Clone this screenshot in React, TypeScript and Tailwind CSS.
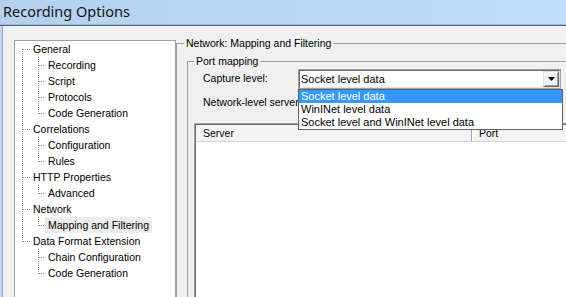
import React from 'react';

type TreeNode = { label: string; children?: string[] };

const tree: TreeNode[] = [
  { label: 'General', children: ['Recording', 'Script', 'Protocols', 'Code Generation'] },
  { label: 'Correlations', children: ['Configuration', 'Rules'] },
  { label: 'HTTP Properties', children: ['Advanced'] },
  { label: 'Network', children: ['Mapping and Filtering'] },
  { label: 'Data Format Extension', children: ['Chain Configuration', 'Code Generation'] },
];

const DOT = '#8c8c8c';

function RootLines({ first, last }: { first: boolean; last: boolean }) {
  return (
    <svg width="15" height="16" className="shrink-0">
      <line x1="7.5" x2="7.5" y1={first ? 8 : 0} y2={last ? 9 : 16} stroke={DOT} strokeDasharray="1 1" />
      <line x1="8" x2="15" y1="8.5" y2="8.5" stroke={DOT} strokeDasharray="1 1" />
    </svg>
  );
}

function ChildLines({ parentLast, last }: { parentLast: boolean; last: boolean }) {
  return (
    <svg width="30" height="16" className="shrink-0">
      {!parentLast && <line x1="7.5" x2="7.5" y1="0" y2="16" stroke={DOT} strokeDasharray="1 1" />}
      <line x1="23.5" x2="23.5" y1="0" y2={last ? 9 : 16} stroke={DOT} strokeDasharray="1 1" />
      <line x1="24" x2="30" y1="8.5" y2="8.5" stroke={DOT} strokeDasharray="1 1" />
    </svg>
  );
}

function TreeRow({ lines, label, selected }: { lines: React.ReactNode; label: string; selected?: boolean }) {
  return (
    <div className="flex h-[16px] items-center">
      {lines}
      <span className={`h-[16px] leading-[16px] px-[3px] whitespace-nowrap ${selected ? 'bg-[#ececec]' : ''}`}>{label}</span>
    </div>
  );
}

function ComboBox() {
  return (
    <div className="relative w-[263px] h-[20px] border border-[#a0a0a0] text-[11px]">
      <div className="flex h-full items-center bg-white border-l border-t border-l-[#696969] border-t-[#696969] border-r border-b border-r-[#e3e3e3] border-b-[#e3e3e3]">
        <span className="flex-1 pl-[1px] leading-[13px]">Socket level data</span>
        <div className="w-[16px] h-full flex items-center justify-center bg-[#f0f0f0] border border-t-[#e3e3e3] border-l-[#e3e3e3] border-r-[#696969] border-b-[#696969] shadow-[inset_1px_1px_0_#fff,inset_-1px_-1px_0_#a0a0a0]">
          <svg width="7" height="4" viewBox="0 0 7 4">
            <polygon points="0,0 7,0 3.5,4" fill="#000" />
          </svg>
        </div>
      </div>
      <div className="absolute -left-px top-[19px] z-10 w-[265px] bg-white border border-[#646464]">
        <div className="h-[13px] leading-[13px] pl-[2px] bg-[#3399ff] text-white">Socket level data</div>
        <div className="h-[13px] leading-[13px] pl-[2px]">WinINet level data</div>
        <div className="h-[13px] leading-[13px] pl-[2px]">Socket level and WinINet level data</div>
      </div>
    </div>
  );
}

export default function App() {
  return (
    <div className="w-[566px] h-[297px] overflow-hidden flex flex-col bg-[#f0f0f0] text-[10.5px] text-black font-['Liberation_Sans',Arial,sans-serif]">
      {/* Title bar */}
      <div className="h-[24px] shrink-0 flex items-center pl-[3px] bg-linear-to-r from-[#b3d1ef] to-[#bfdefc] text-[14.5px] text-[#141414] font-['Noto_Sans',sans-serif]">
        Recording Options
      </div>
      <div className="h-px shrink-0 bg-[#a5b6ca]" />
      <div className="h-px shrink-0 bg-[#52637b]" />

      {/* Body */}
      <div className="flex flex-1 min-h-0">
        <div className="w-[2px] shrink-0 bg-[#bcd8f5]" />
        <div className="w-px shrink-0 bg-[#97a7bb]" />
        <div className="flex items-start flex-1 min-w-0">
          {/* Tree */}
          <div className="mt-[14px] ml-[11px] w-[162px] h-[300px] shrink-0 bg-white border border-[#a0a0a0]">
            {tree.map((node, i) => {
              const first = i === 0;
              const last = i === tree.length - 1;
              return (
                <React.Fragment key={node.label}>
                  <TreeRow lines={<RootLines first={first} last={last} />} label={node.label} />
                  {node.children?.map((child, j) => (
                    <TreeRow
                      key={child + j}
                      lines={<ChildLines parentLast={last} last={j === node.children!.length - 1} />}
                      label={child}
                      selected={child === 'Mapping and Filtering'}
                    />
                  ))}
                </React.Fragment>
              );
            })}
          </div>

          {/* Network group */}
          <fieldset className="mt-[11px] w-[420px] h-[300px] shrink-0 border border-[#a0a0a0]">
            <legend className="ml-[7px] px-[2px] leading-[13px]">Network: Mapping and Filtering</legend>

            <fieldset className="mt-[5px] ml-[10px] w-[400px] h-[300px] border border-[#a0a0a0]">
              <legend className="ml-[6px] px-[2px] leading-[13px]">Port mapping</legend>

              <div className="mt-[1px] flex items-center h-[20px]">
                <span className="w-[110px] pl-[15px] shrink-0">Capture level:</span>
                <ComboBox />
              </div>

              <div className="mt-[4px] h-[20px] flex items-center pl-[15px]">
                <span className="w-[95px] overflow-hidden whitespace-nowrap">Network-level server address mapping for:</span>
              </div>

              {/* List view */}
              <div className="mt-[10px] ml-[6px] w-[400px] h-[200px] border border-[#a0a0a0]">
                <div className="h-full bg-white border-l border-t border-[#696969]">
                  <div className="flex h-[17px] bg-[#f4f4f4] border-b border-[#d5d5d5]">
                    <div className="w-[275px] pl-[7px] leading-[16px] shrink-0">Server</div>
                    <div className="w-px bg-[#a0a0a0]" />
                    <div className="w-px bg-white" />
                    <div className="pl-[6px] leading-[16px]">Port</div>
                  </div>
                </div>
              </div>
            </fieldset>
          </fieldset>
        </div>
      </div>
    </div>
  );
}
